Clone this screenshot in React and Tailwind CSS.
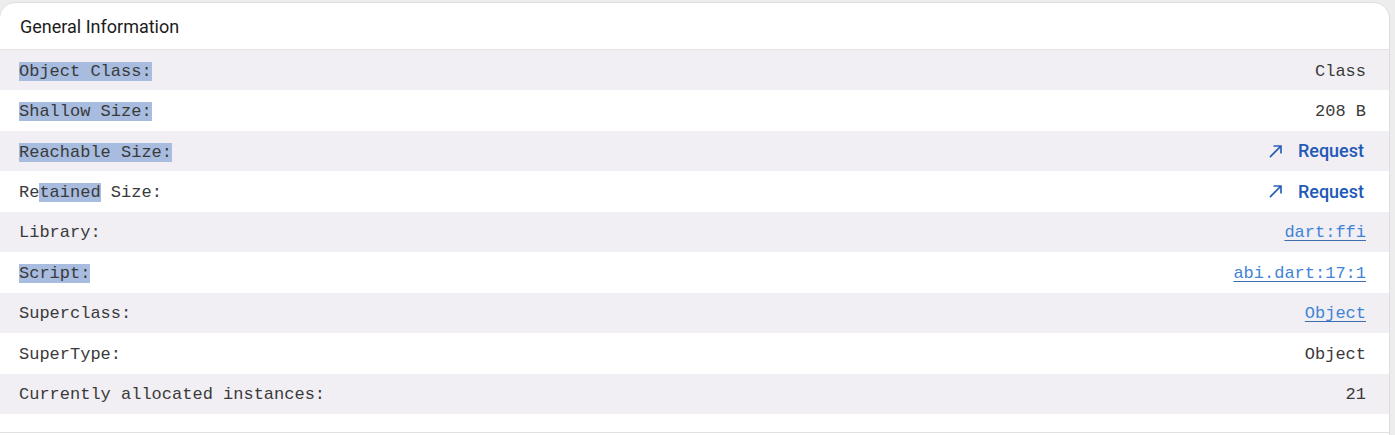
import React from 'react';

const mono = { fontFamily: '"Liberation Mono", "DejaVu Sans Mono", monospace' };
const sans = { fontFamily: 'Roboto, "Liberation Sans", sans-serif' };

const rows = [
  { label: [{ t: 'Object Class:', hl: true }], value: { kind: 'text', v: 'Class' } },
  { label: [{ t: 'Shallow Size:', hl: true }], value: { kind: 'text', v: '208 B' } },
  { label: [{ t: 'Reachable Size:', hl: true }], value: { kind: 'request' } },
  {
    label: [
      { t: 'Re', hl: false },
      { t: 'tained', hl: true },
      { t: ' Size:', hl: false },
    ],
    value: { kind: 'request' },
  },
  { label: [{ t: 'Library:', hl: false }], value: { kind: 'link', v: 'dart:ffi' } },
  { label: [{ t: 'Script:', hl: true }], value: { kind: 'link', v: 'abi.dart:17:1' } },
  { label: [{ t: 'Superclass:', hl: false }], value: { kind: 'link', v: 'Object' } },
  { label: [{ t: 'SuperType:', hl: false }], value: { kind: 'text', v: 'Object' } },
  { label: [{ t: 'Currently allocated instances:', hl: false }], value: { kind: 'text', v: '21' } },
];

function CallMade() {
  return (
    <svg width="20" height="20" viewBox="0 0 24 24" fill="#2a5fb8">
      <path d="M9 5v2h6.59L4 18.59 5.41 20 17 8.41V15h2V5z" />
    </svg>
  );
}

function Value({ value }) {
  if (value.kind === 'request') {
    return (
      <span
        className="flex items-center gap-[12px] mr-[2px] -mt-[3px] text-[18px] font-medium text-[#2359b6]"
        style={sans}
      >
        <CallMade />
        Request
      </span>
    );
  }
  if (value.kind === 'link') {
    return (
      <span
        className="text-[17px] leading-[23px] text-[#3f84d6] underline decoration-[#3d6fb0] underline-offset-[3px]"
        style={mono}
      >
        {value.v}
      </span>
    );
  }
  return (
    <span className="text-[17px] leading-[23px] text-[#3a3a3a]" style={mono}>
      {value.v}
    </span>
  );
}

export default function App() {
  return (
    <div className="w-[1395px] h-[435px] overflow-hidden bg-[#ededed] pt-[2px]">
      <div className="-ml-px w-[1391px] h-[500px] bg-white border border-[#dedede] rounded-t-[16px]">
        <div
          className="h-[47px] flex items-center pl-[20px] border-b border-[#e4e4e4] text-[18px] text-[#1c1c1c]"
          style={sans}
        >
          General Information
        </div>
        {rows.map((r, i) => (
          <div
            key={i}
            className={`h-[40.44px] flex items-center justify-between pt-[2px] pl-[19px] pr-[23px] ${
              i % 2 === 0 ? 'bg-[#f1eff4]' : 'bg-white'
            }`}
          >
            <span className="text-[17px] leading-[23px] text-[#3a3a3a]" style={mono}>
              {r.label.map((s, j) => (
                <span key={j} className={s.hl ? 'bg-[#a7bcdf]' : ''}>
                  {s.t}
                </span>
              ))}
            </span>
            <Value value={r.value} />
          </div>
        ))}
        <div className="h-[18px]" />
        <div className="border-t border-[#e0e0e0]" />
      </div>
    </div>
  );
}
